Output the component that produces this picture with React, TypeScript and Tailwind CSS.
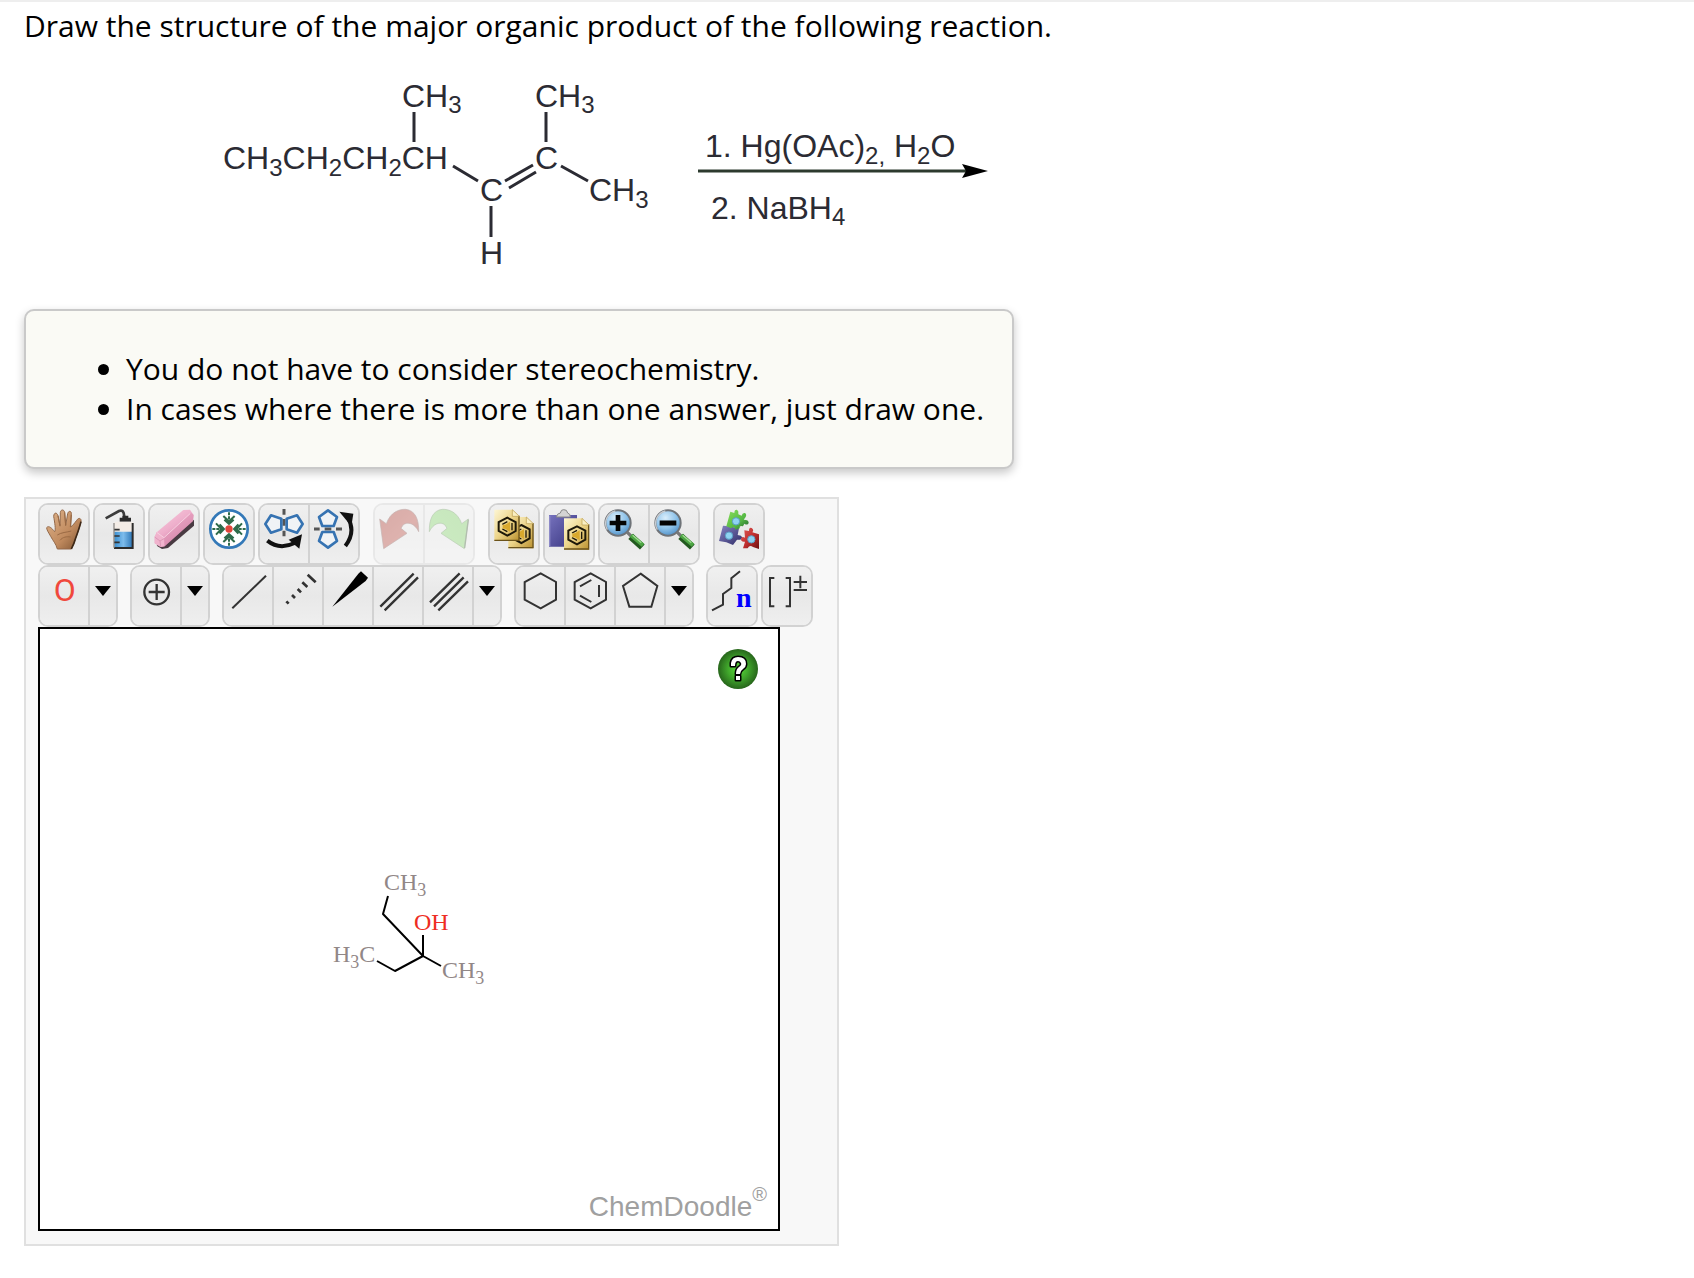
import type { ReactNode } from "react";

const ink = "#333333";

function Icon({ children }: { children: ReactNode }) {
  return (
    <svg viewBox="0 0 120 120" className="block size-10 overflow-visible" fill="none" aria-hidden="true">
      {children}
    </svg>
  );
}

const icons = {
  hand: (
    <Icon>
      <defs>
        <linearGradient id="skin" x1="0" y1="0" x2="1" y2="1">
          <stop offset="0" stopColor="#dfb48c" />
          <stop offset="0.6" stopColor="#c08a5e" />
          <stop offset="1" stopColor="#7d5230" />
        </linearGradient>
      </defs>
      <path
        d="M40 120 C36 104 26 94 20 82 C15 72 8 64 8 56 C14 48 24 58 32 68 C36 62 32 40 29 22 C30 9 39 10 42 20 L48 50 L49 10 C51 0 60 1 62 10 L65 49 L71 14 C74 3 84 6 82 17 L80 54 C86 50 92 42 98 34 C104 24 113 28 111 38 C106 58 100 74 94 90 C91 102 86 110 82 120 Z"
        fill="url(#skin)"
        stroke="#93694a"
        strokeWidth="3"
      />
      <path d="M111 38 C106 58 100 74 94 90 C91 102 86 112 82 120" stroke="#3d2817" strokeWidth="5" />
      <path d="M40 78 C52 70 68 70 82 66 M48 94 C56 84 68 82 80 84 M42 20 L48 52 M62 10 L65 50 M82 17 L79 54" stroke="#9a6a44" strokeWidth="3" />
    </Icon>
  ),
  clean: (
    <Icon>
      <defs>
        <linearGradient id="liquid" x1="0" y1="0" x2="1" y2="0">
          <stop offset="0" stopColor="#3a8fd0" />
          <stop offset="0.5" stopColor="#7dbcec" />
          <stop offset="1" stopColor="#2f78b8" />
        </linearGradient>
      </defs>
      <path d="M20 28 L60 6 Q70 2 74 12 L77 28" stroke="#3c3c3c" strokeWidth="8" />
      <path d="M62 26 h8 v-6 h18 v6 h8 v12 h-34z" fill="#2b2b2b" />
      <path d="M52 38 h46 q6 0 6 8 v72 h-60 v-72 q0-8 8-8z" fill="#f3ece6" />
      <path d="M46 68 h54 v46 h-54z" fill="url(#liquid)" />
      <path d="M101 42 v75 h-56" stroke="#2c2c2c" strokeWidth="6" />
      <path d="M45 42 v74" stroke="#8c8986" strokeWidth="4" />
      <path d="M46 62 h16 M46 81 h16 M46 100 h16" stroke="#333" strokeWidth="5" />
    </Icon>
  ),
  eraser: (
    <Icon>
      <defs>
        <linearGradient id="rubber" x1="0.2" y1="0.1" x2="0.7" y2="0.8">
          <stop offset="0" stopColor="#f6c6d9" />
          <stop offset="0.5" stopColor="#eeaecb" />
          <stop offset="1" stopColor="#d583aa" />
        </linearGradient>
      </defs>
      <path d="M8 110 L24 120 L42 117 L120 50 L120 32z" fill="#2d1b24" opacity="0.85" />
      <path d="M2 84 L8 70 L88 3 L108 2 L119 18 L117 36 L32 112 L20 114 L2 103z" fill="url(#rubber)" />
      <path d="M8 70 L30 86 L32 112 L20 114 L2 103 L2 84z" fill="#f0b3cd" />
      <path d="M30 86 L112 12 L119 18 L117 36 L32 112z" fill="#dc8db0" opacity="0.5" />
      <path d="M8 70 L30 86 L108 14" stroke="#f6cfdf" strokeWidth="3" />
      <path d="M2 84 L18 96 L32 88 M18 96 L20 114" stroke="#dc97b6" strokeWidth="3" />
    </Icon>
  ),
  center: (
    <Icon>
      <circle cx="60" cy="60" r="56" fill="#fff" stroke="#3479b8" strokeWidth="8" />
      <g stroke="#2f6b4b" strokeWidth="6">
        {[0, 90, 180, 270].map((a) => (
          <g key={a} transform={`rotate(${a} 60 60)`}>
            <path d="M60 10 V46" strokeDasharray="9 3" />
            <path d="M43 21 L60 37 L77 21 M46 32 L60 45 L74 32" />
          </g>
        ))}
      </g>
      <circle cx="60" cy="60" r="11" fill="#e2453b" />
    </Icon>
  ),
  flipH: (
    <Icon>
      <path d="M60 0 V17 M60 30 V50 M60 65 V82" stroke="#555" strokeWidth="9" />
      <g stroke="#3673b2" strokeWidth="8" strokeLinejoin="round" fill="#f0f3f6">
        <path d="M4 45 L21 19 L52 29 V61 L21 71z" />
        <path d="M116 45 L99 19 L68 29 V61 L99 71z" />
      </g>
      <path d="M10 95 Q46 124 92 102" stroke="#111" strokeWidth="12" />
      <path d="M74 92 L114 76 L106 119z" fill="#111" />
    </Icon>
  ),
  flipV: (
    <Icon>
      <path d="M0 60 H17 M32 60 H52 M66 60 H84" stroke="#555" strokeWidth="9" />
      <g stroke="#3673b2" strokeWidth="8" strokeLinejoin="round" fill="#f0f3f6">
        <path d="M42 4 L69 24 L59 51 H25 L15 24z" />
        <path d="M42 116 L69 96 L59 69 H25 L15 96z" />
      </g>
      <path d="M94 111 Q126 70 102 26" stroke="#111" strokeWidth="12" />
      <path d="M76 8 L118 14 L112 52 Z" fill="#111" />
    </Icon>
  ),
  undo: (
    <Icon>
      <defs>
        <linearGradient id="undoFill" x1="0" y1="0" x2="1" y2="1">
          <stop offset="0" stopColor="#a8382f" />
          <stop offset="0.6" stopColor="#b94c42" />
          <stop offset="1" stopColor="#7c3a35" />
        </linearGradient>
      </defs>
      <path d="M2 30 L22 44 C34 10 60 0 80 1 C108 4 120 30 119 68 C108 44 86 36 72 48 L66 58 L84 73 L14 119 Z" fill="url(#undoFill)" stroke="#7d504c" strokeWidth="2" />
    </Icon>
  ),
  redo: (
    <Icon>
      <defs>
        <linearGradient id="redoFill" x1="1" y1="0" x2="0" y2="1">
          <stop offset="0" stopColor="#7fce66" />
          <stop offset="1" stopColor="#8bd872" />
        </linearGradient>
      </defs>
      <path d="M118 30 L98 44 C86 10 60 0 40 1 C12 4 0 30 1 68 C12 44 34 36 48 48 L54 58 L36 73 L106 119 Z" fill="url(#redoFill)" stroke="#5e8a50" strokeWidth="2" />
      <path d="M118 32 L107 117" stroke="#4c6b42" strokeWidth="4" />
    </Icon>
  ),
  copy: (
    <Icon>
      <SheetDefs />
      <g transform="translate(42 22)">
        <Sheet />
      </g>
      <Sheet />
    </Icon>
  ),
  paste: (
    <Icon>
      <SheetDefs />
      <path d="M0 18 H84 V113 H0z" fill="url(#board)" />
      <path d="M2 20 V112" stroke="#8d8ac8" strokeWidth="4" />
      <path d="M22 24 Q24 13 34 12 Q36 1 44 2 Q54 1 56 12 Q64 14 64 24z" fill="#d4d4d4" stroke="#888" strokeWidth="3" />
      <g transform="translate(44 26)">
        <Sheet />
      </g>
    </Icon>
  ),
  zoomIn: (
    <Icon>
      <Lens />
      <path d="M42 18 V66 M17 42 H67" stroke="#050505" strokeWidth="14" />
    </Icon>
  ),
  zoomOut: (
    <Icon>
      <Lens />
      <path d="M17 42 H67" stroke="#050505" strokeWidth="15" />
    </Icon>
  ),
  templates: (
    <Icon>
      <defs>
        <linearGradient id="pieceGreen" x1="0" y1="0" x2="1" y2="1">
          <stop offset="0" stopColor="#8be05a" />
          <stop offset="0.6" stopColor="#55b845" />
          <stop offset="1" stopColor="#1f5f2c" />
        </linearGradient>
        <linearGradient id="piecePurple" x1="0" y1="0" x2="1" y2="1">
          <stop offset="0" stopColor="#8683c4" />
          <stop offset="1" stopColor="#2f2c66" />
        </linearGradient>
        <linearGradient id="pieceRed" x1="0" y1="0" x2="1" y2="1">
          <stop offset="0" stopColor="#de5a54" />
          <stop offset="0.5" stopColor="#c23030" />
          <stop offset="1" stopColor="#6d1212" />
        </linearGradient>
      </defs>
      <path d="M12 50 L30 52 L60 58 L56 78 L66 80 L70 86 L64 92 L54 92 L42 108 L22 100 L0 96z" fill="url(#piecePurple)" />
      <path d="M34 8 L46 12 Q46 1 54 2 Q60 6 58 16 L68 20 Q70 10 78 12 Q84 16 80 24 L74 32 Q90 32 89 42 Q86 50 76 44 L72 52 Q60 48 62 58 L50 62 Q46 50 36 58 L22 52z" fill="url(#pieceGreen)" />
      <path d="M76 64 L90 66 Q90 54 98 57 Q106 62 100 70 L120 76 V120 L102 114 Q92 106 86 118 L72 118 L78 98 Q66 100 66 90 Q68 80 78 86z" fill="url(#pieceRed)" />
      <g fill="#8fd2f2" stroke="#5b9fc4" strokeWidth="3">
        <circle cx="51" cy="37" r="11" />
        <circle cx="30" cy="80" r="11" />
        <circle cx="97" cy="91" r="11" />
      </g>
    </Icon>
  ),
  oxygen: (
    <Icon>
      <text x="62" y="91" textAnchor="middle" fontFamily="Roboto, sans-serif" fontSize="96" fill="#f0483c">
        O
      </text>
    </Icon>
  ),
  charge: (
    <Icon>
      <g stroke={ink} strokeWidth="7">
        <circle cx="62" cy="63" r="37" />
        <path d="M62 39 V87 M38 63 H86" />
      </g>
    </Icon>
  ),
  single: (
    <Icon>
      <path d="M13 112 L114 14" stroke={ink} strokeWidth="6" />
    </Icon>
  ),
  hashed: (
    <Icon>
      <path d="M25 91 L32 98 M42 72 L51 81 M59 54 L69 64 M73 34 L88 48 M89 11 L113 34" stroke={ink} strokeWidth="8" />
    </Icon>
  ),
  wedge: (
    <Icon>
      <path d="M13 107 L91 8 L99 1 L120 20 L113 30z" fill="#000" />
    </Icon>
  ),
  double: (
    <Icon>
      <path d="M7 107 L107 8 M20 118 L120 19" stroke={ink} strokeWidth="7" />
    </Icon>
  ),
  triple: (
    <Icon>
      <path d="M6 94 L95 7 M18 106 L107 19 M31 118 L120 31" stroke={ink} strokeWidth="7" />
    </Icon>
  ),
  hexagon: (
    <Icon>
      <path d="M62 7 L108 33 V86 L62 112 L14 86 V33z" stroke={ink} strokeWidth="6" />
    </Icon>
  ),
  benzene: (
    <Icon>
      <path d="M62 7 L108 33 V86 L62 112 L14 86 V33z M30 46 L64 27 M87 42 V78 M30 74 L64 93" stroke={ink} strokeWidth="6" />
    </Icon>
  ),
  pentagon: (
    <Icon>
      <path d="M62 8 L112 45 L94 107 H28 L9 45z" stroke={ink} strokeWidth="6" />
    </Icon>
  ),
  chain: (
    <Icon>
      <path d="M0 118 L33 101 V69 L58 51 V22 L84 1" stroke={ink} strokeWidth="6" />
      <text x="72" y="107" fontFamily="'Liberation Serif', serif" fontWeight="700" fontSize="84" fill="#0000ff">
        n
      </text>
    </Icon>
  ),
  brackets: (
    <Icon>
      <path d="M22 21 H9 V106 H22 M56 21 H69 V106 H56 M80 33 H120 M100 14 V52 M80 57 H120" stroke={ink} strokeWidth="6" />
    </Icon>
  ),
};

function SheetDefs() {
  return (
    <defs>
      <linearGradient id="sheet" x1="0" y1="0" x2="1" y2="1">
        <stop offset="0" stopColor="#fdf6d4" />
        <stop offset="0.5" stopColor="#ecd489" />
        <stop offset="1" stopColor="#b98f2c" />
      </linearGradient>
      <linearGradient id="board" x1="0" y1="0" x2="1" y2="1">
        <stop offset="0" stopColor="#7672bd" />
        <stop offset="1" stopColor="#37347f" />
      </linearGradient>
    </defs>
  );
}

function Sheet() {
  return (
    <g>
      <path d="M1 2 H56 L76 22 V96 H1z" fill="url(#sheet)" />
      <path d="M1 94 H75 V20" stroke="#6b531b" strokeWidth="4" />
      <path d="M55 2 V22 H76z" fill="#fbf0c4" stroke="#b89a4c" strokeWidth="2" />
      <path d="M40 26 L65 39 V66 L40 80 L14 66 V39z" stroke="#1d1809" strokeWidth="6" />
      <path d="M25 46 L40 38 M25 60 L40 68 M54 42 V64" stroke="#1d1809" strokeWidth="4" />
      <path d="M26 47 H34 L48 38 V68 L34 59 H26z" fill="#d9a92d" />
    </g>
  );
}

function Lens() {
  return (
    <>
      <defs>
        <radialGradient id="glass" cx="0.4" cy="0.3" r="0.7">
          <stop offset="0" stopColor="#d9edfb" />
          <stop offset="0.6" stopColor="#8fc3ea" />
          <stop offset="1" stopColor="#5695cb" />
        </radialGradient>
      </defs>
      <path d="M70 70 L86 86" stroke="#777" strokeWidth="10" />
      <path d="M80 82 L115 114" stroke="#22591f" strokeWidth="21" />
      <path d="M81 79 L117 109" stroke="#4da644" strokeWidth="12" />
      <path d="M86 79 L112 101" stroke="#a3dc94" strokeWidth="4" />
      <circle cx="42" cy="42" r="38" fill="url(#glass)" stroke="#6f7378" strokeWidth="6" />
      <path d="M10 62 A38 38 0 0 1 34 6" stroke="#c7cbd0" strokeWidth="4" />
    </>
  );
}

type Tool = { label: string; icon?: ReactNode };
const more: Tool = { label: "More choices" };

const topTools: Tool[][][] = [
  [
    [{ label: "Move", icon: icons.hand }],
    [{ label: "Clean", icon: icons.clean }],
    [{ label: "Erase", icon: icons.eraser }],
    [{ label: "Center", icon: icons.center }],
    [
      { label: "Flip horizontally", icon: icons.flipH },
      { label: "Flip vertically", icon: icons.flipV },
    ],
  ],
  [
    [
      { label: "Undo", icon: icons.undo },
      { label: "Redo", icon: icons.redo },
    ],
  ],
  [
    [{ label: "Copy", icon: icons.copy }],
    [{ label: "Paste", icon: icons.paste }],
    [
      { label: "Zoom in", icon: icons.zoomIn },
      { label: "Zoom out", icon: icons.zoomOut },
    ],
  ],
  [[{ label: "Templates", icon: icons.templates }]],
];

const drawTools: Tool[][][] = [
  [[{ label: "Oxygen", icon: icons.oxygen }, more]],
  [[{ label: "Increase charge", icon: icons.charge }, more]],
  [
    [
      { label: "Single bond", icon: icons.single },
      { label: "Recessed bond", icon: icons.hashed },
      { label: "Protruding bond", icon: icons.wedge },
      { label: "Double bond", icon: icons.double },
      { label: "Triple bond", icon: icons.triple },
      more,
    ],
  ],
  [
    [
      { label: "Cyclohexane ring", icon: icons.hexagon },
      { label: "Benzene ring", icon: icons.benzene },
      { label: "Cyclopentane ring", icon: icons.pentagon },
      more,
    ],
  ],
  [[{ label: "Repeating chain", icon: icons.chain }], [{ label: "Brackets and charge", icon: icons.brackets }]],
];

function ToolGroup({ tools }: { tools: Tool[] }) {
  const disabled = tools[0].label === "Undo";
  return (
    <div
      className={`flex divide-x-2 divide-[#d2d2d2] overflow-hidden rounded-[10px] border-2 border-[#d2d2d2] ${disabled ? "opacity-40" : ""}`}
    >
      {tools.map((tool) => (
        <button
          key={tool.label}
          type="button"
          aria-label={tool.label}
          disabled={disabled}
          className="box-content flex h-[58px] bg-linear-to-b from-[#f0f0f0] from-0% via-[#e8e8e8] via-50% to-[#efefef] to-100%"
        >
          {tool.icon ? (
            <span className="block w-12 px-1 pt-1">{tool.icon}</span>
          ) : (
            <span className="block w-[26px] px-[5px] pt-[19px]">
              <svg viewBox="0 0 16 10" className="h-[10px] w-4" aria-hidden="true">
                <path d="M0 0 H16 L8 10z" fill="#000" />
              </svg>
            </span>
          )}
        </button>
      ))}
    </div>
  );
}

function Sub({ children, dy }: { children: ReactNode; dy: number }) {
  return (
    <tspan fontSize="24" dy={dy}>
      {children}
    </tspan>
  );
}

function Reaction() {
  return (
    <svg viewBox="220 70 780 210" className="ml-[196px] block h-[210px] w-[780px]" role="img" aria-label="Reaction scheme">
      <g fontFamily="'Liberation Sans', Arial, sans-serif" fontSize="32" fill="#2b2b33">
        <text x="402" y="107">CH<Sub dy={6}>3</Sub></text>
        <text x="535" y="107">CH<Sub dy={6}>3</Sub></text>
        <text x="223" y="169">
          CH<Sub dy={7}>3</Sub><tspan dy="-7">CH</tspan><Sub dy={7}>2</Sub><tspan dy="-7">CH</tspan><Sub dy={7}>2</Sub><tspan dy="-7">CH</tspan>
        </text>
        <text x="480" y="201">C</text>
        <text x="535" y="169">C</text>
        <text x="589" y="201">CH<Sub dy={7}>3</Sub></text>
        <text x="480" y="264">H</text>
        <text x="705" y="157">
          1. Hg(OAc)<Sub dy={7}>2,</Sub><tspan dy="-7"> H</tspan><Sub dy={7}>2</Sub><tspan dy="-7">O</tspan>
        </text>
        <text x="711" y="219">2. NaBH<Sub dy={6}>4</Sub></text>
      </g>
      <path
        d="M414 112 V142 M546 112 V142 M491 206 V237 M453 166 L478 181 M505 181 L533 165 M509 188 L536 172 M561 166 L588 181"
        stroke="#2b2b33"
        strokeWidth="3"
      />
      <path d="M698 171 H966" stroke="#2c3a2e" strokeWidth="3" />
      <path d="M962 164 L988 171 L962 178 L966 171z" fill="#000" />
    </svg>
  );
}

function Molecule() {
  return (
    <svg viewBox="40 629 738 600" className="block h-[600px] w-full" role="img" aria-label="Drawn structure">
      <path d="M388 896 L383 914 L423 956 V935 M423 956 L441 966 M423 956 L395 971 L377 961" stroke="#000" strokeWidth="2" fill="none" strokeLinejoin="round" />
      <g fontFamily="'Liberation Serif', 'Times New Roman', serif" fontSize="24" fill="#918787">
        <text x="384" y="890">CH<tspan fontSize="18" dy="6">3</tspan></text>
        <text x="414" y="930" fill="#ee2c22">OH</text>
        <text x="333" y="962">H<tspan fontSize="18" dy="6">3</tspan><tspan dy="-6">C</tspan></text>
        <text x="442" y="978">CH<tspan fontSize="18" dy="6">3</tspan></text>
      </g>
    </svg>
  );
}

export default function App() {
  return (
    <main className="border-t-2 border-[#eeeeee] bg-white px-6 pb-8 font-['Open_Sans','Noto_Sans',sans-serif] text-[30px] leading-10 text-black">
      <h1 className="pt-1">Draw the structure of the major organic product of the following reaction.</h1>
      <div className="pt-6 pb-[29px]">
        <Reaction />
      </div>

      <section className="w-fit rounded-[10px] border-2 border-[#c9c9c9] bg-[#fafaf5] py-[38px] pr-7 pl-[100px] shadow-[0_4px_10px_rgba(0,0,0,0.22)]">
        <ul>
          {["You do not have to consider stereochemistry.", "In cases where there is more than one answer, just draw one."].map((t) => (
            <li key={t} className="relative">
              <span className="absolute top-[15px] -left-7 size-[11px] rounded-full bg-black" aria-hidden="true" />
              {t}
            </li>
          ))}
        </ul>
      </section>

      <section className="mt-7 w-fit border-2 border-[#e0e0e0] bg-[#f8f8f8] pt-1 pr-6 pb-[13px] pl-3">
        <div className="flex gap-[13px]">
          {topTools.map((cluster, i) => (
            <div key={i} className="flex gap-[3px]">
              {cluster.map((tools) => (
                <ToolGroup key={tools[0].label} tools={tools} />
              ))}
            </div>
          ))}
        </div>
        <div className="flex gap-3">
          {drawTools.map((cluster, i) => (
            <div key={i} className="flex gap-[3px]">
              {cluster.map((tools) => (
                <ToolGroup key={tools[0].label} tools={tools} />
              ))}
            </div>
          ))}
        </div>
        <div className="relative mr-[33px] border-2 border-black bg-white">
          <Molecule />
          <button type="button" aria-label="Help" className="absolute top-5 right-5">
            <svg viewBox="0 0 40 40" className="block size-10" aria-hidden="true">
              <defs>
                <radialGradient id="help">
                  <stop offset="0" stopColor="#5bdc3a" />
                  <stop offset="0.5" stopColor="#41a82c" />
                  <stop offset="1" stopColor="#27661b" />
                </radialGradient>
              </defs>
              <circle cx="20" cy="20" r="20" fill="url(#help)" />
              <path
                d="M13 17 V14 Q14 8 20 8 Q28 8 28 15 Q28 18 25 20 Q22 22 22 25 H18 Q18 20 21 18 Q24 16 23 14 Q22 12 20 12 Q17 12 17 17z M18 27 H22 V31 H18z"
                fill="#fff"
                stroke="#000"
                strokeWidth="3"
                strokeLinejoin="round"
                paintOrder="stroke"
              />
            </svg>
          </button>
          <p className="absolute right-[11px] bottom-[6px] flex font-['Liberation_Sans',Arial,sans-serif] text-[28px] leading-8 text-[#a0a0a0]">
            ChemDoodle
            <span className="-mt-[9px] text-[20px] leading-6">®</span>
          </p>
        </div>
      </section>
    </main>
  );
}
